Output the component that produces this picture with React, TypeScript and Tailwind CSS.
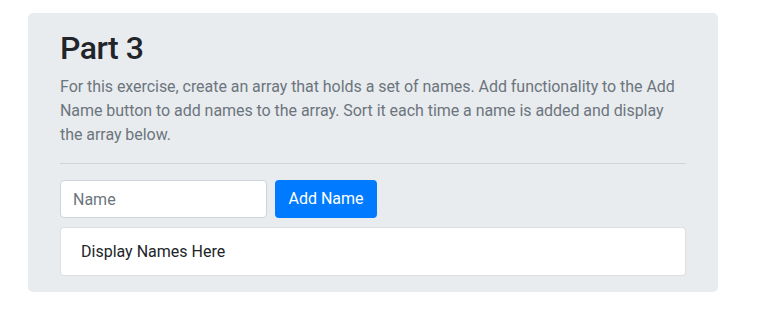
import React from "react";

export default function App() {
  return (
    <div className="min-h-[320px] w-[759px] bg-white pt-[13px] font-['Roboto',sans-serif]">
      <div className="ml-[28px] w-[690px] rounded-[5px] bg-[#e9ecef] px-8 pt-4 pb-4">
        <h2 className="mb-2 text-[32px] leading-[1.2] font-medium tracking-[-0.5px] text-[#212529]">Part 3</h2>
        <p className="mb-4 text-[16px] leading-6 tracking-[-0.05px] text-[#6c757d] whitespace-nowrap">
          For this exercise, create an array that holds a set of names. Add functionality to the Add
          <br />
          Name button to add names to the array. Sort it each time a name is added and display
          <br />
          the array below.
        </p>
        <hr className="mb-4 border-0 border-t border-[rgba(0,0,0,0.1)]" />
        <div className="mb-[9px] flex gap-2">
          <input
            type="text"
            placeholder="Name"
            className="h-[38px] w-[207px] rounded-[4px] border border-[#ced4da] bg-white px-3 text-[16px] text-[#495057] placeholder:text-[#6c757d] outline-none"
          />
          <button className="h-[38px] w-[102px] rounded-[4px] bg-[#007bff] text-[16px] text-white">
            Add Name
          </button>
        </div>
        <div className="h-[49px] rounded-[4px] border border-[rgba(0,0,0,0.125)] bg-white px-5 text-[16px] leading-[47px] text-[#212529]">
          Display Names Here
        </div>
      </div>
    </div>
  );
}
